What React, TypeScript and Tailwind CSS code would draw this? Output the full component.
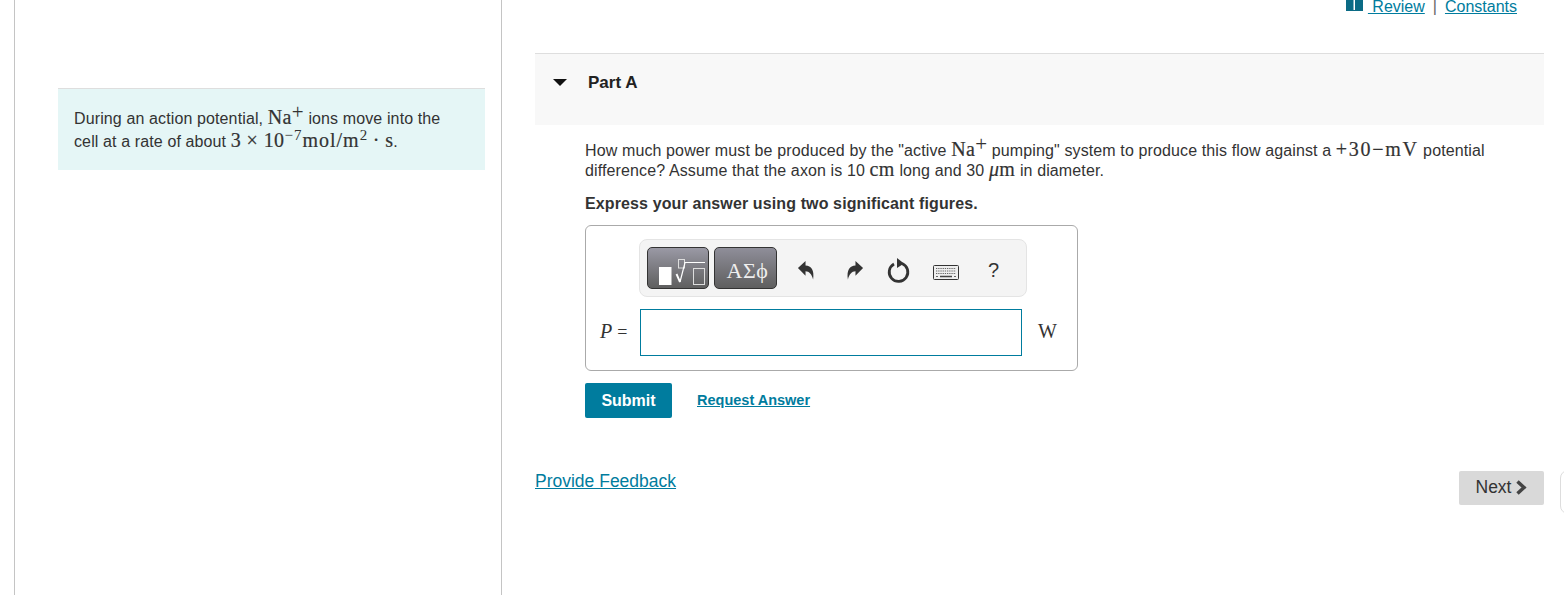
import React from "react";

const M = ({ children, className = "" }: { children: React.ReactNode; className?: string }) => (
  <span className={`font-['Liberation_Serif',serif] text-[20px] tracking-[0.4px] text-[#333] [-webkit-text-stroke:0.2px_#333] ${className}`}>{children}</span>
);

const Sup = ({ children, className = "" }: { children: React.ReactNode; className?: string }) => (
  <span className={`relative font-['Liberation_Serif',serif] leading-none ${className}`}>{children}</span>
);

const Reply = ({ flip = false }: { flip?: boolean }) => (
  <svg width="18" height="20" viewBox="0 0 19 19" preserveAspectRatio="none" className={flip ? "-scale-x-100" : ""}>
    <path d="M1 7.500 9 1v4.200C15 5.500 18.500 9.500 17 18.500 15.500 13.500 13 11 9 10.800V15Z" fill="#333" />
  </svg>
);

const Rotate = () => (
  <svg width="24" height="27" viewBox="0 0 24 27" fill="none">
    <path d="M15 6.500A9.300 9.300 0 1 1 7 7" stroke="#333" strokeWidth="2.800" />
    <path d="M10 1 17 6.500 10 11Z" fill="#333" />
  </svg>
);

const Keyboard = () => (
  <svg width="26" height="15" viewBox="0 0 26 15" fill="none">
    <rect x="0.500" y="0.500" width="25" height="14" rx="1" fill="#eee" stroke="#333" />
    <path d="M3 3.500h20M3 6h20M3 8.500h20" stroke="#666" strokeWidth="1.200" strokeDasharray="1.300 0.900" />
    <path d="M7 11.500h12" stroke="#444" strokeWidth="1.500" />
    <path d="M3 11.500h2M21 11.500h2" stroke="#666" strokeWidth="1.200" />
  </svg>
);

const Book = () => (
  <svg width="17" height="12" viewBox="0 0 17 12">
    <path d="M0 0h7.500v10H0ZM9 0h8v10H9Z" fill="#0b6b85" />
    <path d="M0 10.500h17" stroke="#0b6b85" />
  </svg>
);

const TemplateIcon = () => (
  <svg width="62" height="42" viewBox="0 0 62 42" fill="none">
    <rect x="12" y="20" width="12.500" height="18" fill="#fff" />
    <rect x="31.500" y="12.500" width="6" height="8.500" stroke="#ddd" />
    <path d="M33 35 38 15.500H58" stroke="#fff" strokeWidth="1.200" />
    <path d="M29.500 27 33 35" stroke="#fff" strokeWidth="1.900" />
    <rect x="46.500" y="21.500" width="11" height="16" stroke="#ddd" />
  </svg>
);

export default function App() {
  return (
    <div className="relative flex h-[595px] w-[1564px] overflow-hidden bg-white font-['Liberation_Sans',Arial,sans-serif] text-[16px] tracking-[0.12px] text-[#333]">
      <div className="w-[14px] shrink-0" />
      <aside className="h-full w-[488px] shrink-0 border-x border-[#c4c4c4] pl-[43px] pr-[16px] pt-[88px]">
        <div className="h-[82px] border-t border-[#dedede] bg-[#e5f6f6] px-[16px] pt-[17px] leading-[23px]">
          <div className="whitespace-nowrap">
            During an action potential, <M>Na</M>
            <Sup className="-top-[5px] text-[21px]">+</Sup> ions move into the
          </div>
          <div className="-mt-px whitespace-nowrap">
            cell at a rate of about <M>3 × 10</M>
            <Sup className="-top-[7px] text-[15px] tracking-[1px]">−7</Sup>
            <M className="tracking-[1px]">mol/m</M>
            <Sup className="-top-[7px] text-[15px]">2</Sup>
            <M className="tracking-[-0.5px]"> · s</M>.
          </div>
        </div>
      </aside>

      <main className="min-w-0 flex-1 pl-[33px] pr-[20px]">
        <div className="flex h-[53px] items-start justify-end pr-[27px]">
          <div className="-mt-[2px] flex items-center leading-[18px] tracking-normal text-[#007c9e]">
            <span className="-mt-[3px]"><Book /></span>
            <a className="ml-[5px] underline decoration-[#007c9e]">&nbsp;Review</a>
            <span className="mx-[8px] text-[#666]">|</span>
            <a className="underline decoration-[#007c9e]">Constants</a>
          </div>
        </div>

        <div className="flex h-[72px] items-start border-t border-[#dedede] bg-[#f8f8f8] pl-[18px] pt-[20px]">
          <svg width="14" height="7" viewBox="0 0 14 7" className="mt-[5px]">
            <path d="M0 0h14L7 7Z" fill="#111" />
          </svg>
          <h2 className="ml-[21px] text-[17px] font-bold leading-[18px] tracking-normal text-[#222]">Part A</h2>
        </div>

        <div className="pl-[50px]">
          <p className="mt-[14px] whitespace-nowrap leading-[20px]">
            How much power must be produced by the "active <M>Na</M>
            <Sup className="-top-[5px] text-[21px]">+</Sup> pumping" system to produce this flow against a <M className="tracking-[1.700px]">+30−mV</M> potential
          </p>
          <p className="-mt-[2px] whitespace-nowrap leading-[20px]">
            difference? Assume that the axon is 10 <M>cm</M> long and 30 <M><i>μ</i>m</M> in diameter.
          </p>
          <p className="mt-[13px] font-bold leading-[20px]">Express your answer using two significant figures.</p>

          <div className="mt-[11px] h-[146px] w-[493px] rounded-[6px] border border-[#aaa] pl-[53px] pt-[13px]">
            <div className="flex h-[58px] w-[388px] items-center rounded-[8px] border border-[#e4e4e4] bg-[#f4f4f4] pl-[7px]">
              <div className="h-[42px] w-[62px] rounded-[5px] border border-[#333] bg-linear-to-b from-[#9a99a5] to-[#5f5f5f]">
                <div className="-m-px"><TemplateIcon /></div>
              </div>
              <div className="ml-[5px] flex h-[42px] w-[63px] items-center justify-center rounded-[5px] border border-[#333] bg-linear-to-b from-[#8f8e99] to-[#5f5f5f] pl-[4px] pt-[5px] font-['Liberation_Serif',serif] text-[22px] tracking-[0.6px] text-[#eee]">
                ΑΣϕ
              </div>
              <div className="ml-[19px] flex w-[19px] justify-center pt-[4px]"><Reply /></div>
              <div className="ml-[30px] flex w-[19px] justify-center pt-[4px]"><Reply flip /></div>
              <div className="ml-[23px] flex w-[24px] justify-center pt-[4px]"><Rotate /></div>
              <div className="ml-[22px] flex w-[26px] justify-center pt-[9px]"><Keyboard /></div>
              <div className="ml-[29px] pt-[3px] text-[20px] leading-none tracking-normal text-[#333]">?</div>
            </div>
            <div className="mt-[12px] flex h-[47px] items-center">
              <div className="-ml-[39px] -mt-[3px] w-[40px] whitespace-nowrap tracking-normal text-[#333]">
                <i className="font-['Liberation_Serif',serif] text-[20px]">P</i>
                <span className="ml-[5px] font-['Liberation_Serif',serif] text-[18px]">=</span>
              </div>
              <div className="h-[47px] w-[382px] shrink-0 border border-[#007c9e] bg-white" />
              <span className="-mt-[3px] ml-[16px] font-['Liberation_Serif',serif] text-[20px] tracking-normal text-[#333]">W</span>
            </div>
          </div>

          <div className="mt-[12px] flex h-[35px] items-center">
            <button className="h-[35px] w-[87px] rounded-[2px] bg-[#007c9e] text-[16px] font-bold tracking-normal text-white">Submit</button>
            <a className="ml-[25px] text-[14.500px] font-bold tracking-normal text-[#007c9e] underline">Request Answer</a>
          </div>
        </div>

        <div className="mt-[53px] flex items-start justify-between">
          <a className="text-[17.500px] leading-[20px] tracking-normal text-[#007c9e] underline">Provide Feedback</a>
          <button className="flex h-[34px] w-[85px] items-center justify-center gap-[4px] rounded-[2px] bg-[#d9d9d9] pb-[2px] text-[17.500px] tracking-normal text-[#333]">
            Next
            <svg width="12" height="15" viewBox="0 0 12 15" fill="none"><path d="M2.500 1.500 9 7.500 2.500 13.500" stroke="#444" strokeWidth="3.500" /></svg>
          </button>
        </div>
      </main>

      <div className="absolute left-[1560px] top-[470px] h-[44px] w-[30px] rounded-[8px] border border-[#ddd] bg-white" />
    </div>
  );
}
